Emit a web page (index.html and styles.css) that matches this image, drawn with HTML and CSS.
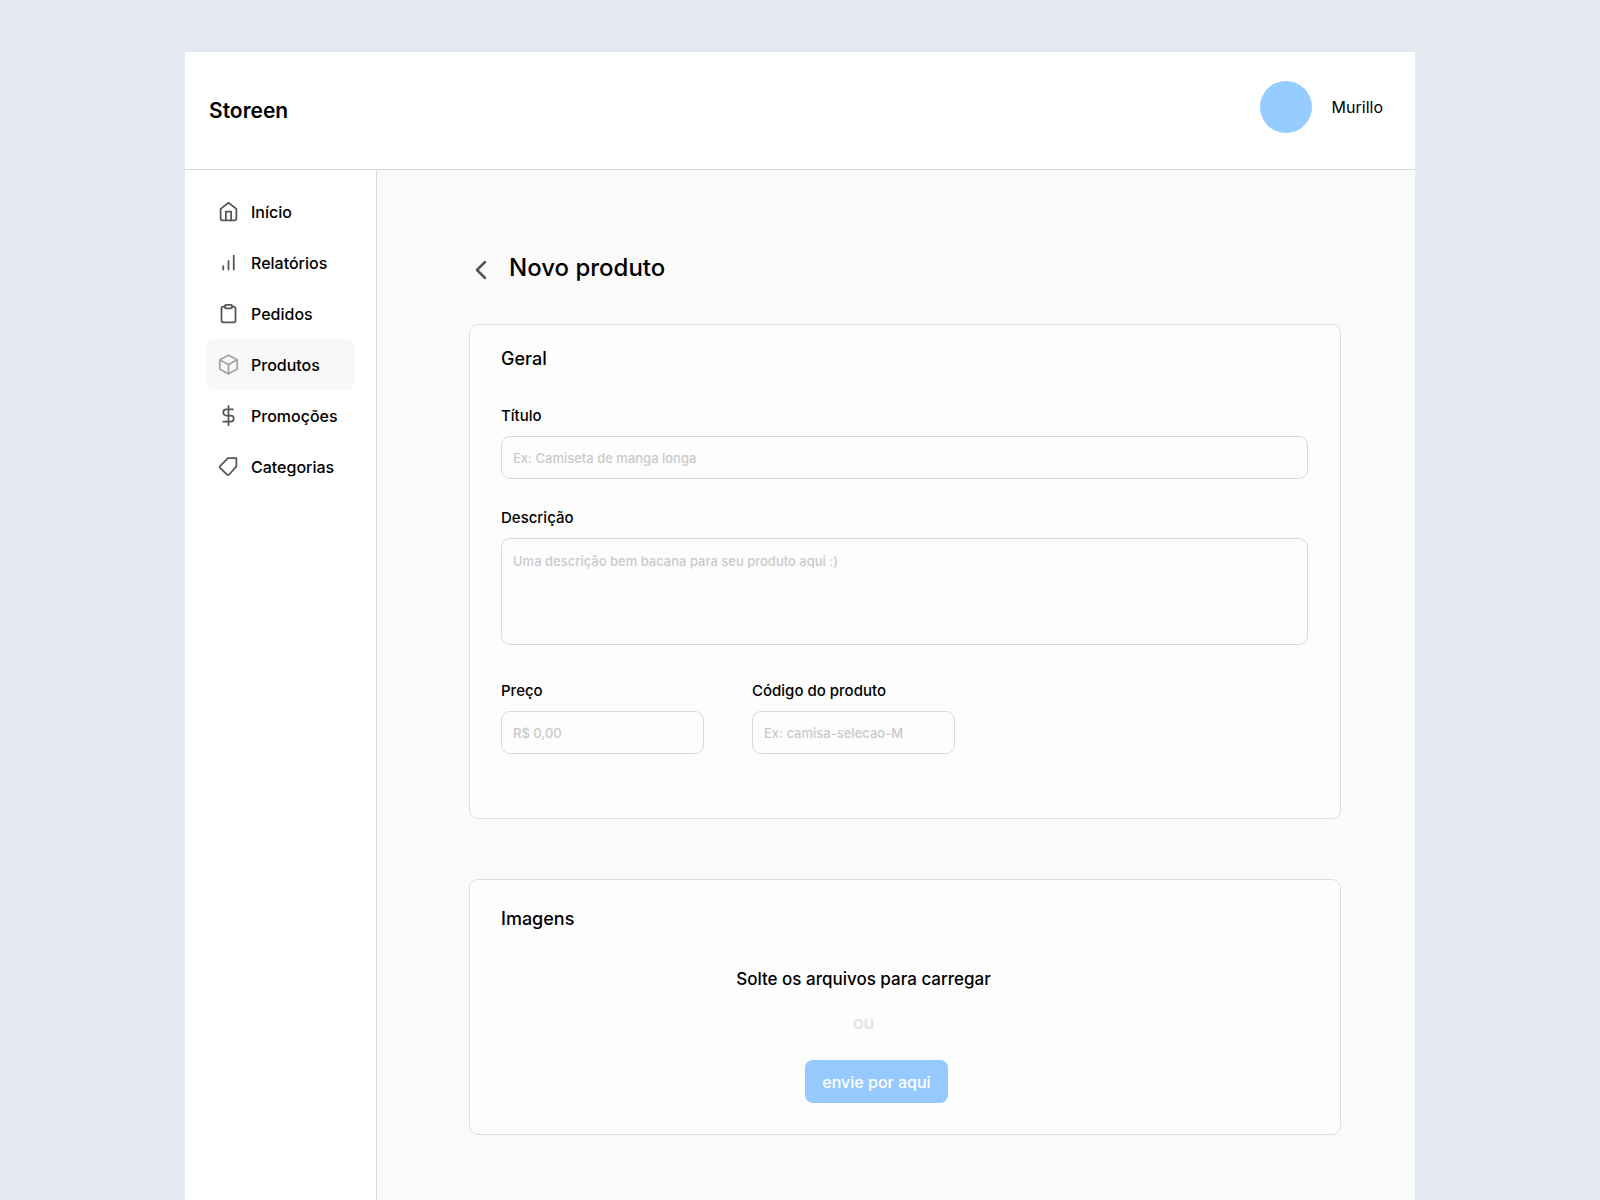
FILE: index.html
```html
<!DOCTYPE html>
<html lang="pt-BR">
<head>
  <meta charset="utf-8">
  <meta name="viewport" content="width=device-width, initial-scale=1">
  <title>Storeen – Novo produto</title>
  <link rel="stylesheet" href="styles.css">
</head>
<body>
  <div class="app">
    <header class="header">
      <span class="brand">Storeen</span>
      <div class="user">
        <span class="avatar"></span>
        <span class="user-name">Murillo</span>
      </div>
    </header>

    <div class="body">
      <nav class="sidebar">
        <a class="nav-item" href="#inicio">
          <svg class="icon" viewBox="0 0 24 24"><path d="M3 9l9-7 9 7v11a2 2 0 0 1-2 2H5a2 2 0 0 1-2-2z"/><path d="M9 22V12h6v10"/></svg>
          Início
        </a>
        <a class="nav-item" href="#relatorios">
          <svg class="icon" viewBox="0 0 24 24"><path d="M12 20V10M18 20V4M6 20v-4"/></svg>
          Relatórios
        </a>
        <a class="nav-item" href="#pedidos">
          <svg class="icon" viewBox="0 0 24 24"><path d="M16 4h2a2 2 0 0 1 2 2v14a2 2 0 0 1-2 2H6a2 2 0 0 1-2-2V6a2 2 0 0 1 2-2h2"/><rect x="8" y="2" width="8" height="4" rx="1"/></svg>
          Pedidos
        </a>
        <a class="nav-item nav-item-active" href="#produtos">
          <svg class="icon" viewBox="0 0 24 24"><path d="M22 16.500V7.500a1.500 1.500 0 0 0-.8-1.300L12.800 1.700a1.700 1.700 0 0 0-1.600 0L2.800 6.200A1.500 1.500 0 0 0 2 7.500v9a1.500 1.500 0 0 0 .8 1.300l8.400 4.500a1.700 1.700 0 0 0 1.600 0l8.400-4.500a1.500 1.500 0 0 0 .8-1.300z"/><path d="M2.300 6.800L12 12l9.700-5.200M12 22.500V12"/></svg>
          Produtos
        </a>
        <a class="nav-item" href="#promocoes">
          <svg class="icon" viewBox="0 0 24 24"><path d="M12 1v22M17 5H9.500a3.500 3.500 0 0 0 0 7h5a3.500 3.500 0 0 1 0 7H6"/></svg>
          Promoções
        </a>
        <a class="nav-item" href="#categorias">
          <svg class="icon" viewBox="0 0 24 24"><path d="M21 11.900V2.500h-9.600L2.400 11.500a1.500 1.500 0 0 0 0 2l7.600 7.600a2 2 0 0 0 2.800 0z"/></svg>
          Categorias
        </a>
      </nav>

      <main class="main">
        <div class="page-head">
          <a class="back" href="#produtos" aria-label="Voltar">
            <svg class="back-icon" viewBox="0 0 12 20"><path d="M10 2L2 10l8 8"/></svg>
          </a>
          <h1 class="page-title">Novo produto</h1>
        </div>

        <section class="card card-general">
          <h2 class="card-title">Geral</h2>
          <div class="field">
            <label class="label" for="titulo">Título</label>
            <input class="input" id="titulo" type="text" placeholder="Ex: Camiseta de manga longa">
          </div>
          <div class="field">
            <label class="label" for="descricao">Descrição</label>
            <textarea class="input textarea" id="descricao" placeholder="Uma descrição bem bacana para seu produto aqui :)"></textarea>
          </div>
          <div class="field-row">
            <div class="field field-short">
              <label class="label" for="preco">Preço</label>
              <input class="input" id="preco" type="text" placeholder="R$ 0,00">
            </div>
            <div class="field field-short">
              <label class="label" for="codigo">Código do produto</label>
              <input class="input" id="codigo" type="text" placeholder="Ex: camisa-selecao-M">
            </div>
          </div>
        </section>

        <section class="card card-images">
          <h2 class="card-title">Imagens</h2>
          <div class="dropzone">
            <p class="drop-text">Solte os arquivos para carregar</p>
            <p class="drop-or">ou</p>
            <button class="upload" type="button">envie por aqui</button>
          </div>
        </section>
      </main>
    </div>
  </div>
</body>
</html>
```
FILE: styles.css
```css
* {
  box-sizing: border-box;
}

body {
  display: flex;
  min-height: 100vh;
  margin: 0;
  padding: 52px 185px 0;
  background: #e4e8f0;
  color: #000;
  font-family: Inter, "Liberation Sans", sans-serif;
  font-size: 16px;
  font-weight: 500;
}

h1,
h2,
p {
  margin: 0;
  font-weight: 500;
}

.app {
  display: flex;
  flex: 1;
  flex-direction: column;
  background: #fff;
}

.header {
  display: flex;
  align-items: center;
  justify-content: space-between;
  padding: 29px 32px 36px 24px;
  border-bottom: 1px solid #d9d9d9;
}

.brand {
  padding-top: 8px;
  font-size: 21px;
  font-weight: 600;
  line-height: 28px;
}

.user {
  display: flex;
  align-items: center;
  gap: 20px;
}

.avatar {
  width: 52px;
  height: 52px;
  border-radius: 50%;
  background: #96ccff;
}

.user-name {
  font-weight: 400;
}

.body {
  display: flex;
  flex: 1;
}

.sidebar {
  flex: 0 0 192px;
  padding: 16px 21px;
  border-right: 1px solid #d9d9d9;
}

.nav-item {
  display: flex;
  align-items: center;
  gap: 12px;
  height: 51px;
  padding-left: 12px;
  border-radius: 9px;
  color: #000;
  text-decoration: none;
}

.nav-item-active {
  background: #f8f8f8;
}

.icon {
  width: 21px;
  height: 21px;
  fill: none;
  stroke: #555;
  stroke-width: 2;
  stroke-linecap: round;
  stroke-linejoin: round;
}

.nav-item-active .icon {
  stroke: #a3a3a3;
}

.main {
  flex: 1;
  padding: 80px 74px 64px 92px;
  background: #fafafa;
}

.page-head {
  display: flex;
  align-items: center;
  gap: 22px;
  margin-bottom: 38px;
  padding-left: 6px;
}

.back {
  display: flex;
  padding-top: 3px;
}

.back-icon {
  width: 12px;
  height: 20px;
  fill: none;
  stroke: #555;
  stroke-width: 2.5;
  stroke-linecap: round;
  stroke-linejoin: round;
}

.page-title {
  font-size: 24px;
  line-height: 36px;
}

.card {
  padding: 0 32px 0 31px;
  border: 1px solid #dedede;
  border-radius: 9px;
  background: #fdfdfd;
}

.card-general {
  padding-top: 22px;
  padding-bottom: 64px;
}

.card-images {
  margin-top: 60px;
  padding-top: 27px;
  padding-bottom: 31px;
}

.card-title {
  font-size: 18px;
  line-height: 24px;
}

.field {
  display: flex;
  flex-direction: column;
  gap: 10px;
  margin-top: 29px;
}

.card-title + .field {
  margin-top: 35px;
}

.label {
  font-size: 15px;
  line-height: 20px;
}

.input {
  width: 100%;
  height: 43px;
  padding: 0 11px;
  border: 1px solid #dadada;
  border-radius: 9px;
  background: transparent;
  font: inherit;
  font-size: 13px;
}

.input::placeholder {
  color: #cacaca;
  opacity: 1;
}

.textarea {
  display: block;
  height: 107px;
  padding-top: 12px;
  line-height: 20px;
  resize: none;
}

.field-row {
  display: flex;
  gap: 48px;
  margin-top: 36px;
}

.field-short {
  flex: 0 1 203px;
  margin-top: 0;
}

.dropzone {
  display: flex;
  flex-direction: column;
  align-items: center;
  margin-top: 36px;
  padding-right: 82px;
}

.drop-text {
  font-size: 17px;
  line-height: 24px;
}

.drop-or {
  margin-top: 20px;
  color: #e2e2e2;
  font-size: 18px;
  line-height: 24px;
}

.upload {
  height: 43px;
  margin-top: 25px;
  margin-left: 26px;
  padding: 0 17px;
  border: 0;
  border-radius: 8px;
  background: #96caff;
  color: #fff;
  font: inherit;
}
```
